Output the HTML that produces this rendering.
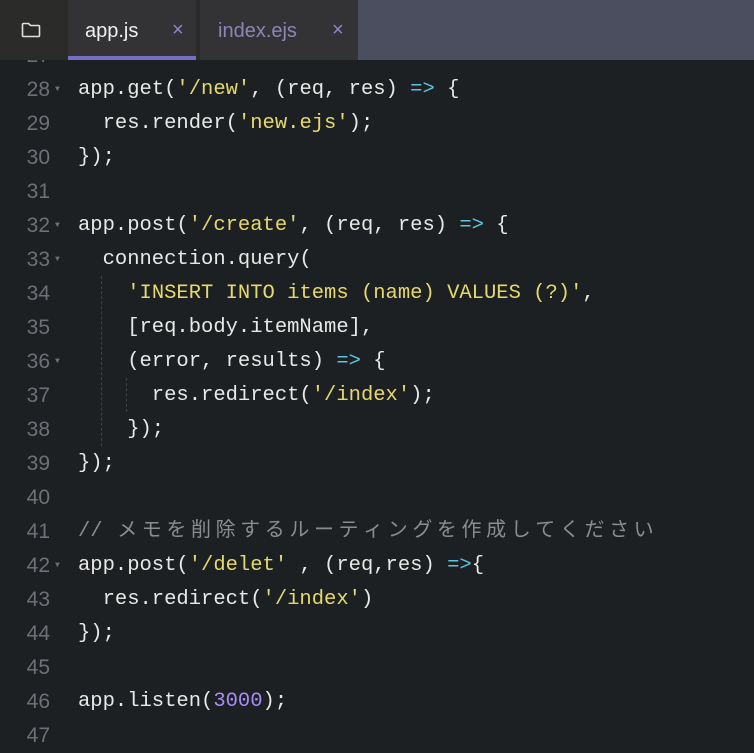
<!DOCTYPE html>
<html><head><meta charset="utf-8"><style>
body{margin:0;width:754px;height:736px;overflow:hidden;background:#1d2023;font-family:"Liberation Mono","Noto Sans CJK JP",monospace;}
#tabs{position:absolute;left:0;top:0;width:754px;height:60px;background:#4a4e5f;}
.t{position:absolute;top:0;height:60px;background:#333335;font-family:"Liberation Sans",sans-serif;font-size:20px;}
#code{position:absolute;left:0;top:39px;width:754px;}
.l{position:relative;height:34px;line-height:34px;font-size:20.5px;color:#e8e8e6;white-space:pre;}
.n{position:absolute;left:0;width:50px;text-align:right;color:#6d7074;font-family:"Liberation Sans",sans-serif;font-size:21px;}
.f{position:absolute;left:55px;top:0;color:#6d7074;font-size:8px;}
.c{position:absolute;left:78px;}
.s{color:#e6d96b}.a{color:#5ec4de}.p{color:#a98bf5}.cm{color:#8a8c8e}
.j{display:inline-block;width:24.6px;text-align:center;font-size:20px}
.g{position:absolute;width:0;border-left:1px dashed #3d4044;}
</style></head><body>
<div id="code">
<div class="l"><span class="n">27</span></div>
<div class="l"><span class="n">28</span><span class="f">▼</span><span class="c">app.get(<span class="s">'/new'</span>, (req, res) <span class="a">=&gt;</span> {</span></div>
<div class="l"><span class="n">29</span><span class="c">  res.render(<span class="s">'new.ejs'</span>);</span></div>
<div class="l"><span class="n">30</span><span class="c">});</span></div>
<div class="l"><span class="n">31</span></div>
<div class="l"><span class="n">32</span><span class="f">▼</span><span class="c">app.post(<span class="s">'/create'</span>, (req, res) <span class="a">=&gt;</span> {</span></div>
<div class="l"><span class="n">33</span><span class="f">▼</span><span class="c">  connection.query(</span></div>
<div class="l"><span class="n">34</span><span class="c">    <span class="s">'INSERT INTO items (name) VALUES (?)'</span>,</span></div>
<div class="l"><span class="n">35</span><span class="c">    [req.body.itemName],</span></div>
<div class="l"><span class="n">36</span><span class="f">▼</span><span class="c">    (error, results) <span class="a">=&gt;</span> {</span></div>
<div class="l"><span class="n">37</span><span class="c">      res.redirect(<span class="s">'/index'</span>);</span></div>
<div class="l"><span class="n">38</span><span class="c">    });</span></div>
<div class="l"><span class="n">39</span><span class="c">});</span></div>
<div class="l"><span class="n">40</span></div>
<div class="l"><span class="n">41</span><span class="c cm">// <span class="j">メ</span><span class="j">モ</span><span class="j">を</span><span class="j">削</span><span class="j">除</span><span class="j">す</span><span class="j">る</span><span class="j">ル</span><span class="j">ー</span><span class="j">テ</span><span class="j">ィ</span><span class="j">ン</span><span class="j">グ</span><span class="j">を</span><span class="j">作</span><span class="j">成</span><span class="j">し</span><span class="j">て</span><span class="j">く</span><span class="j">だ</span><span class="j">さ</span><span class="j">い</span></span></div>
<div class="l"><span class="n">42</span><span class="f">▼</span><span class="c">app.post(<span class="s">'/delet'</span> , (req,res) <span class="a">=&gt;</span>{</span></div>
<div class="l"><span class="n">43</span><span class="c">  res.redirect(<span class="s">'/index'</span>)</span></div>
<div class="l"><span class="n">44</span><span class="c">});</span></div>
<div class="l"><span class="n">45</span></div>
<div class="l"><span class="n">46</span><span class="c">app.listen(<span class="p">3000</span>);</span></div>
<div class="l"><span class="n">47</span></div>
</div>
<div class="g" style="left:101px;top:276px;height:170px"></div>
<div class="g" style="left:126px;top:378px;height:34px"></div>
<div id="tabs">
<div class="t" style="left:0;width:68px;background:#2b2b29">
<svg style="position:absolute;left:21px;top:22px" width="20" height="16" viewBox="0 0 20 16"><path d="M1.5 2.5a1 1 0 0 1 1-1h5l2 2h8a1 1 0 0 1 1 1v9a1 1 0 0 1-1 1h-15a1 1 0 0 1-1-1z" fill="none" stroke="#e0e0e0" stroke-width="1.6"/></svg></div>
<div class="t" style="left:68px;width:128px;color:#f0f0f0"><span style="position:absolute;left:17px;top:20px">app.js</span><span style="position:absolute;left:104px;top:19px;color:#8c87c8">×</span><div style="position:absolute;left:0;bottom:0;width:128px;height:4px;background:#7a6bc4"></div></div>
<div class="t" style="left:200px;width:158px;color:#8a86b8"><span style="position:absolute;left:18px;top:20px">index.ejs</span><span style="position:absolute;left:132px;top:19px;color:#8c87c8">×</span></div>
<div style="position:absolute;left:196px;top:0;width:4px;height:60px;background:#2b2b29"></div>
</div>
</body></html>
